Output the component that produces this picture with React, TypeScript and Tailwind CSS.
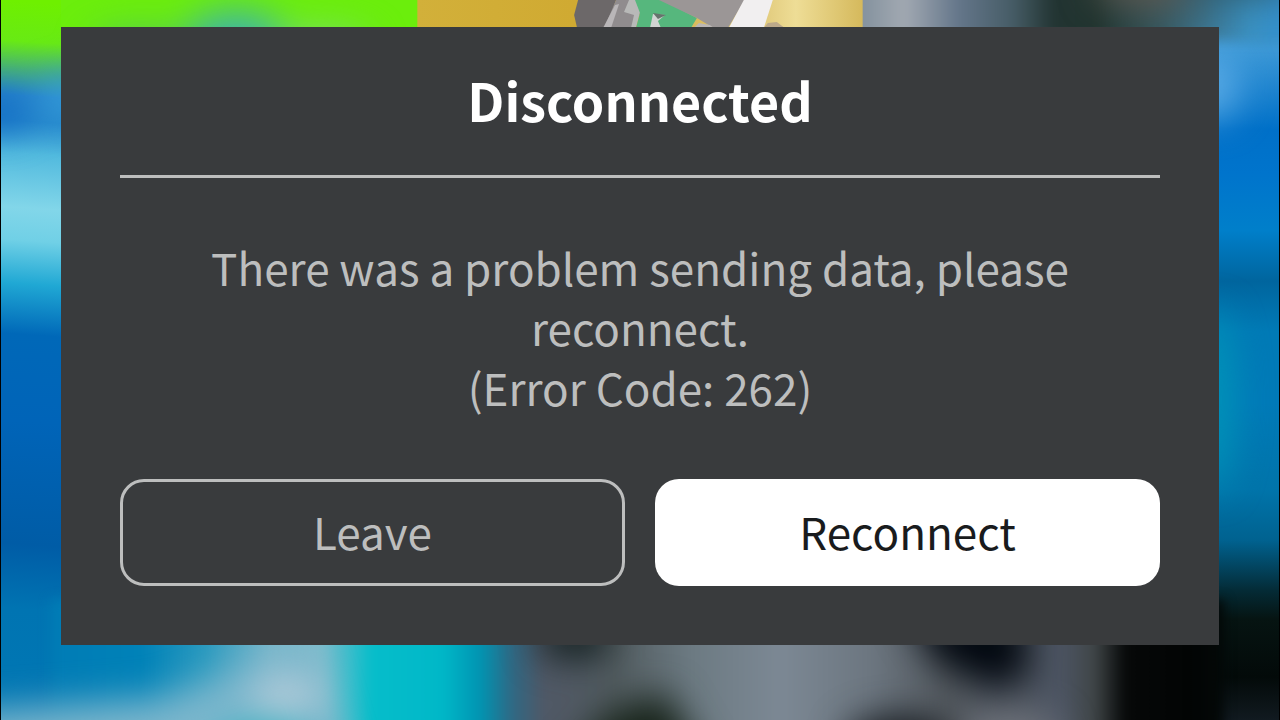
import React from "react";

interface IDisconnectDialogProps {
  title: string;
  message: string;
  errorCode: number;
}

const App: React.FC = () => {
  return (
    <main className="relative isolate min-h-screen overflow-hidden border-x border-black px-[60px] pt-[27px] pb-[75px] font-['Noto_Sans_CJK_SC',sans-serif]">
      <Backdrop />
      <DisconnectDialog
        title="Disconnected"
        message="There was a problem sending data, please reconnect."
        errorCode={262}
      />
    </main>
  );
};

export default App;

const DisconnectDialog = ({
  title,
  message,
  errorCode,
}: IDisconnectDialogProps) => {
  return (
    <section
      role="alertdialog"
      aria-labelledby="dialog-title"
      aria-describedby="dialog-message"
      className="bg-[#393b3d] px-[59px] pt-9 pb-[59px] text-center"
    >
      <h1
        id="dialog-title"
        className="text-[52px] leading-[74px] font-bold text-white"
      >
        {title}
      </h1>

      <hr className="mt-[38px] border-t-3 border-[#bdbebe]" />

      <p
        id="dialog-message"
        className="mt-[59px] text-[44px] leading-[60px] text-[#bdbebe]"
      >
        {message}
        <br />
        (Error Code: {errorCode})
      </p>

      <div className="mt-[62px] grid grid-cols-2 gap-[30px] text-[44px] leading-[60px]">
        <button
          type="button"
          className="h-[107px] rounded-3xl border-3 border-[#bdbebe] pb-1 text-[#bdbebe]"
        >
          Leave
        </button>
        <button
          type="button"
          className="h-[107px] rounded-3xl bg-white pb-1 text-[#191b1d]"
        >
          Reconnect
        </button>
      </div>
    </section>
  );
};

const Backdrop = () => {
  return (
    <svg
      className="absolute inset-0 -z-10 h-full w-full"
      viewBox="0 0 1280 720"
      preserveAspectRatio="none"
      aria-hidden="true"
    >
      <defs>
        <linearGradient id="left" x1="0" y1="0" x2="-50" y2="720" gradientUnits="userSpaceOnUse">
          <stop offset="0" stopColor="#6ef000" />
          <stop offset="0.055" stopColor="#68ea14" />
          <stop offset="0.095" stopColor="#46b078" />
          <stop offset="0.13" stopColor="#2a88cc" />
          <stop offset="0.165" stopColor="#2688cc" />
          <stop offset="0.21" stopColor="#52bade" />
          <stop offset="0.285" stopColor="#82d6e9" />
          <stop offset="0.33" stopColor="#70d0e6" />
          <stop offset="0.39" stopColor="#20a8d4" />
          <stop offset="0.46" stopColor="#0068b8" />
          <stop offset="0.58" stopColor="#0064b8" />
          <stop offset="0.75" stopColor="#005ca6" />
          <stop offset="0.84" stopColor="#0074b2" />
          <stop offset="1" stopColor="#0078b4" />
        </linearGradient>
        <linearGradient id="right" x1="0" y1="0" x2="0" y2="1">
          <stop offset="0" stopColor="#37657a" />
          <stop offset="0.03" stopColor="#3e90bf" />
          <stop offset="0.07" stopColor="#3c98d6" />
          <stop offset="0.18" stopColor="#0070c8" />
          <stop offset="0.24" stopColor="#0074cc" />
          <stop offset="0.32" stopColor="#007fca" />
          <stop offset="0.39" stopColor="#00659e" />
          <stop offset="0.46" stopColor="#007ab6" />
          <stop offset="0.56" stopColor="#007ab8" />
          <stop offset="0.68" stopColor="#0074aa" />
          <stop offset="0.75" stopColor="#006290" />
          <stop offset="0.82" stopColor="#042b36" />
          <stop offset="0.86" stopColor="#061412" />
          <stop offset="0.94" stopColor="#030a09" />
          <stop offset="1" stopColor="#111a20" />
        </linearGradient>
        <linearGradient id="top" x1="863" y1="0" x2="1280" y2="0" gradientUnits="userSpaceOnUse">
          <stop offset="0" stopColor="#84929e" />
          <stop offset="0.1" stopColor="#a2a9b2" />
          <stop offset="0.23" stopColor="#64768a" />
          <stop offset="0.36" stopColor="#465c66" />
          <stop offset="0.46" stopColor="#223432" />
          <stop offset="0.56" stopColor="#21342f" />
          <stop offset="0.7" stopColor="#34545a" />
          <stop offset="0.82" stopColor="#3a7088" />
          <stop offset="0.93" stopColor="#3a90c0" />
          <stop offset="1" stopColor="#3490cc" />
        </linearGradient>
        <linearGradient id="bottom" x1="0" y1="0" x2="1280" y2="0" gradientUnits="userSpaceOnUse">
          <stop offset="0" stopColor="#0078b4" />
          <stop offset="0.11" stopColor="#0082b8" />
          <stop offset="0.16" stopColor="#2a9abf" />
          <stop offset="0.21" stopColor="#78b6ca" />
          <stop offset="0.25" stopColor="#80bccc" />
          <stop offset="0.29" stopColor="#06bdca" />
          <stop offset="0.345" stopColor="#00b8c8" />
          <stop offset="0.375" stopColor="#0094b2" />
          <stop offset="0.4" stopColor="#306884" />
          <stop offset="0.425" stopColor="#505866" />
          <stop offset="0.48" stopColor="#525c60" />
          <stop offset="0.54" stopColor="#6c7a82" />
          <stop offset="0.61" stopColor="#7c8894" />
          <stop offset="0.68" stopColor="#6c7680" />
          <stop offset="0.74" stopColor="#545a60" />
          <stop offset="0.83" stopColor="#4c5462" />
          <stop offset="0.855" stopColor="#404648" />
          <stop offset="0.88" stopColor="#060808" />
          <stop offset="0.93" stopColor="#020404" />
          <stop offset="1" stopColor="#05100e" />
        </linearGradient>
        <linearGradient id="poster" x1="0" y1="0" x2="1" y2="0">
          <stop offset="0" stopColor="#d2b03a" />
          <stop offset="0.35" stopColor="#d0aa32" />
          <stop offset="0.75" stopColor="#ddc473" />
          <stop offset="0.85" stopColor="#eedd96" />
          <stop offset="1" stopColor="#d5b95c" />
        </linearGradient>
        <filter id="soft" x="-50%" y="-50%" width="200%" height="200%" colorInterpolationFilters="sRGB">
          <feGaussianBlur stdDeviation="18" />
        </filter>
        <filter id="edge" x="-20%" y="-50%" width="140%" height="200%" colorInterpolationFilters="sRGB">
          <feGaussianBlur stdDeviation="6" />
        </filter>
      </defs>

      <rect width="640" height="720" fill="url(#left)" />
      <rect x="640" width="640" height="720" fill="url(#right)" />
      <rect x="60" width="580" height="40" fill="#6bee0c" />
      <rect x="800" y="-80" width="560" height="120" fill="url(#top)" filter="url(#edge)" />
      <rect y="600" x="50" width="1175" height="220" fill="url(#bottom)" filter="url(#edge)" />

      <g filter="url(#soft)">
        {/* top left and left edge */}
        <ellipse cx="235" cy="42" rx="52" ry="30" fill="#3cb0b0" />
        <ellipse cx="140" cy="48" rx="50" ry="16" fill="#50c068" />
        <ellipse cx="320" cy="48" rx="50" ry="16" fill="#7cd880" />
        <ellipse cx="0" cy="112" rx="28" ry="18" fill="#1068c4" />
        <ellipse cx="66" cy="95" rx="22" ry="20" fill="#359fdc" />
        {/* top right and right edge */}
        <ellipse cx="1150" cy="-16" rx="55" ry="22" fill="#5e5850" />
        <ellipse cx="1240" cy="-20" rx="60" ry="16" fill="#2c5464" />
        <ellipse cx="1212" cy="86" rx="26" ry="34" fill="#5cace6" />
        <ellipse cx="1212" cy="400" rx="22" ry="90" fill="#0094b8" />
        {/* bottom edge */}
        <path d="M-60 714 L160 698 L240 670 L310 650 L345 770 L-60 780 Z" fill="#7cb6cc" />
        <ellipse cx="285" cy="696" rx="36" ry="22" fill="#b0cad8" />
        <ellipse cx="265" cy="746" rx="50" ry="22" fill="#30b0c0" />
        <ellipse cx="575" cy="638" rx="38" ry="22" fill="#142020" />
        <path d="M560 770 L610 712 L665 692 L710 770 Z" fill="#162218" />
        <path d="M905 610 L1025 610 L1030 672 L1000 690 L940 664 Z" fill="#020810" />
        <ellipse cx="900" cy="744" rx="55" ry="28" fill="#14181c" />
        <ellipse cx="1010" cy="736" rx="50" ry="24" fill="#70747c" />
      </g>

      {/* poster with the figure's shoe */}
      <rect x="417" width="446" height="40" fill="url(#poster)" />
      <path d="M578 0 L616 0 L606 28 L577 28 L574 15 Z" fill="#6c6869" />
      <path d="M616 0 L635 0 L640 13 L634 28 L604 28 Z" fill="#908c8e" />
      <path d="M615 5 L619 4 L611 28 L603 28 Z" fill="#b9b6b8" />
      <path d="M629 0 L637 0 L640 12 L636 28 L631 28 L634 15 L624 12 Z" fill="#b8b9b8" />
      <path d="M635 0 L662 0 L697 18 L691 28 L636 28 L640 13 Z" fill="#56b77d" />
      <path d="M653 14 L665 15 L658 21 L661 28 L650 28 Z" fill="#d2d5d3" />
      <path d="M653 13 L666 15 L658 19 Z" fill="#66736c" />
      <path d="M659 0 L745 0 L728 28 L712 27 L697 18 Z" fill="#9b9696" />
      <path d="M694 28 L699 23 L710 25 L714 28 Z" fill="#bab6b5" />
      <path d="M744 0 L773 0 L764 28 L729 28 Z" fill="#f1eff0" />
      <path d="M764 28 L768 23 L777 22 L785 28 Z" fill="#bca98a" />
    </svg>
  );
};
